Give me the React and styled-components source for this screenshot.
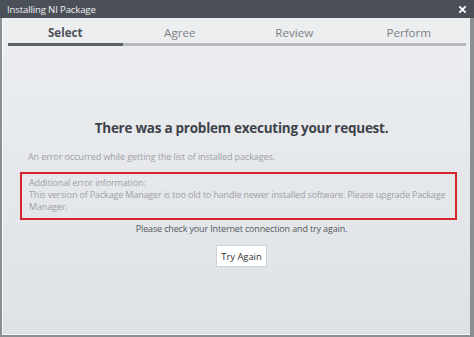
import React from "react";
import styled, { createGlobalStyle } from "styled-components";

const Global = createGlobalStyle`
  html, body { margin: 0; padding: 0; background: #8b8e92; }
  body { font-family: "Open Sans", "Noto Sans", sans-serif; }
  * { box-sizing: border-box; }
`;

const Window = styled.div`
  width: 474px;
  height: 337px;
  display: flex;
  flex-direction: column;
  background: #8b8e92;
`;

const TitleBar = styled.div`
  height: 18px;
  flex: none;
  background: #4b4f57;
  display: flex;
  align-items: center;
  justify-content: space-between;
  padding: 0 7px 0 7px;
  color: #eef0f2;
  font-size: 9.6px;
  letter-spacing: -0.15px;
`;

const Close = styled.svg`
  width: 9px;
  height: 9px;
`;

const Body = styled.div`
  flex: 1;
  margin: 0 4px 2px 2px;
  background: linear-gradient(#eceef0, #dfe2e5);
  box-shadow: inset 1px 0 0 rgba(255,255,255,0.7), inset 0 -1px 0 rgba(255,255,255,0.7);
  display: flex;
  flex-direction: column;
  padding: 0 4px 0 6px;
`;

const Steps = styled.div`
  display: grid;
  grid-template-columns: repeat(4, 1fr);
  height: 29px;
  padding-top: 6px;
`;

const Step = styled.div`
  display: flex;
  flex-direction: column;
  align-items: center;
  justify-content: space-between;
`;

const StepLabel = styled.div`
  font-size: 11.6px;
  line-height: 18px;
  font-weight: ${(p) => (p.$active ? 700 : 400)};
  color: ${(p) => (p.$active ? "#4e5258" : "#7d8186")};
`;

const StepBar = styled.div`
  align-self: stretch;
  height: 3px;
  background: ${(p) => (p.$active ? "#5c6066" : "#b6b8bb")};
  margin-bottom: 1px;
`;

const Content = styled.div`
  display: flex;
  flex-direction: column;
  padding: 0 3px 0 12px;
`;

const Heading = styled.h1`
  margin: 71px 0 0;
  text-align: center;
  font-size: 13.5px;
  letter-spacing: -0.25px;
  font-weight: 700;
  color: #3e424a;
  line-height: 20px;
`;

const Muted = styled.p`
  margin: 13px 0 0 8px;
  font-size: 9px;
  letter-spacing: -0.1px;
  line-height: 12px;
  color: #9ea1a6;
`;

const ErrorBox = styled.div`
  margin: 9px 0 0 0;
  width: 437px;
  height: 48px;
  border: 2px solid #d7232e;
  padding: 3px 2px 3px 7px;
  font-size: 9px;
  letter-spacing: -0.15px;
  line-height: 12px;
  color: #9ea1a6;
`;

const Hint = styled.p`
  margin: 2px 0 0;
  text-align: center;
  font-size: 9px;
  letter-spacing: -0.15px;
  line-height: 13px;
  color: #54585e;
`;

const ButtonRow = styled.div`
  display: flex;
  justify-content: center;
  margin-top: 10px;
`;

const Button = styled.button`
  background: #ffffff;
  border: 1px solid #cfd1d4;
  height: 22px;
  padding: 0 4px;
  font-family: inherit;
  font-size: 9.4px;
  color: #2f3237;
  cursor: pointer;
`;

const steps = ["Select", "Agree", "Review", "Perform"];

export default function App() {
  return (
    <Window>
      <Global />
      <TitleBar>
        <span>Installing NI Package</span>
        <Close viewBox="0 0 10 10">
          <path d="M1.5 1.5 L8.5 8.5 M8.5 1.5 L1.5 8.5" stroke="#ffffff" strokeWidth="2" />
        </Close>
      </TitleBar>
      <Body>
        <Steps>
          {steps.map((s, i) => (
            <Step key={s}>
              <StepLabel $active={i === 0}>{s}</StepLabel>
              <StepBar $active={i === 0} />
            </Step>
          ))}
        </Steps>
        <Content>
          <Heading>There was a problem executing your request.</Heading>
          <Muted>An error occurred while getting the list of installed packages.</Muted>
          <ErrorBox>
            Additional error information:
            <br />
            This version of Package Manager is too old to handle newer installed software. Please upgrade Package Manager.
          </ErrorBox>
          <Hint>Please check your Internet connection and try again.</Hint>
          <ButtonRow>
            <Button>Try Again</Button>
          </ButtonRow>
        </Content>
      </Body>
    </Window>
  );
}
